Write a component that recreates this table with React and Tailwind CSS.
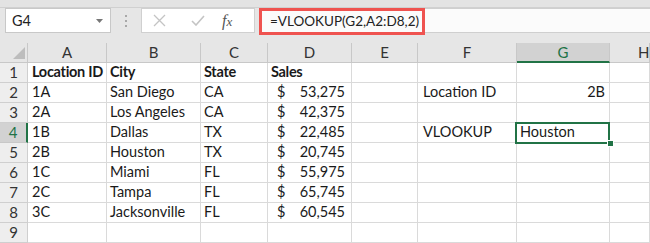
import React from "react";

const cols = ["A", "B", "C", "D", "E", "F", "G", "H"];

const rows = [
  { a: "Location ID", b: "City", c: "State", d: "Sales", bold: true },
  { a: "1A", b: "San Diego", c: "CA", d: "53,275", f: "Location ID", g: "2B" },
  { a: "2A", b: "Los Angeles", c: "CA", d: "42,375" },
  { a: "1B", b: "Dallas", c: "TX", d: "22,485", f: "VLOOKUP", g: "Houston", sel: true },
  { a: "2B", b: "Houston", c: "TX", d: "20,745" },
  { a: "1C", b: "Miami", c: "FL", d: "55,975" },
  { a: "2C", b: "Tampa", c: "FL", d: "65,745" },
  { a: "3C", b: "Jacksonville", c: "FL", d: "60,545" },
  {},
];

const cell = "h-[20px] border-r border-b border-[#dadada] flex items-center text-[14.5px] leading-none text-[#1a1a1a] whitespace-nowrap overflow-visible";

export default function App() {
  return (
    <div className="w-[650px] h-[243px] overflow-hidden bg-white font-['Lato',sans-serif] select-none">
      {/* toolbar */}
      <div className="h-[43px] bg-[#e6e6e6] flex flex-col">
        <div className="h-[8px] border-b border-[#d0d0d0] bg-[#e3e3e3]" />
        <div className="flex items-start h-[34px]">
          <div className="ml-[5px] w-[106px] h-[25px] bg-white border border-[#c8c8c8] flex items-center justify-between pl-[6px] pr-[7px]">
            <span className="text-[14.5px] text-[#222]">G4</span>
            <svg width="7" height="4" viewBox="0 0 7 4"><path d="M0 0h7L3.5 4z" fill="#777" /></svg>
          </div>
          <div className="ml-[14px] mt-[7px] flex flex-col gap-[3px]">
            <div className="w-[2px] h-[2px] bg-[#a8a8a8]" />
            <div className="w-[2px] h-[2px] bg-[#a8a8a8]" />
            <div className="w-[2px] h-[2px] bg-[#a8a8a8]" />
          </div>
          <div className="ml-[14px] w-[114px] h-[25px] bg-white border border-[#d0d0d0] flex items-center">
            <svg className="ml-[11px]" width="13" height="13" viewBox="0 0 13 13">
              <path d="M1 1L12 12M12 1L1 12" stroke="#c4c4c4" strokeWidth="1.3" />
            </svg>
            <svg className="ml-[25px]" width="14" height="11" viewBox="0 0 14 11">
              <path d="M1 6L5 10L13 1" stroke="#c4c4c4" strokeWidth="1.6" fill="none" />
            </svg>
            <span className="ml-[17px] font-['Liberation_Serif',serif] italic text-[16px] text-[#555]">
              f<span className="text-[13px]">x</span>
            </span>
          </div>
          <div className="ml-[4px] flex-1 h-[25px] bg-[#fbfbfb] border-y border-[#cfcfcf] relative">
            <div className="absolute left-0 top-[-1px] w-[166px] h-[27px] border-[3px] border-[#ef5350] flex items-center pl-[8px]">
              <span className="text-[13.5px] text-[#222] whitespace-nowrap">=VLOOKUP(G2,A2:D8,2)</span>
            </div>
          </div>
        </div>
      </div>

      {/* grid */}
      <div className="grid grid-cols-[28px_79px_94px_67px_84px_66px_99px_93px_1fr]">
        {/* header row */}
        <div className="h-[20px] bg-[#e6e6e6] border-r border-b border-[#c8c8c8] flex items-end justify-end pr-[2px] pb-[3px]">
          <svg width="12" height="12" viewBox="0 0 12 12"><path d="M12 0V12H0z" fill="#bdbdbd" /></svg>
        </div>
        {cols.map((c) =>
          c === "G" ? (
            <div key={c} className="h-[20px] bg-[#d2d2d2] border-r border-[#c8c8c8] border-b-2 border-b-[#217346] flex items-center justify-center text-[15px] text-[#217346] pt-[1px]">
              {c}
            </div>
          ) : (
            <div key={c} className={`h-[20px] bg-[#e6e6e6] border-r border-b border-[#c8c8c8] flex items-center ${c === "H" ? "justify-start pl-[28px]" : "justify-center"} text-[15px] text-[#333]`}>
              {c}
            </div>
          )
        )}
        {rows.map((r, i) => {
          const n = i + 1;
          const b = r.bold ? " font-bold tracking-[-0.3px]" : "";
          return (
            <React.Fragment key={n}>
              {r.sel ? (
                <div className="h-[20px] bg-[#d2d2d2] border-b border-[#c8c8c8] border-r-2 border-r-[#217346] flex items-center justify-center text-[15px] text-[#217346]">
                  {n}
                </div>
              ) : (
                <div className="h-[20px] bg-[#eeeeee] border-r border-b border-[#cfcfcf] flex items-center justify-center text-[15px] text-[#333]">
                  {n}
                </div>
              )}
              <div className={cell + " pl-[4px]" + b}>{r.a}</div>
              <div className={cell + " pl-[3px]" + b}>{r.b}</div>
              <div className={cell + " pl-[3px]" + b}>{r.c}</div>
              {r.bold ? (
                <div className={cell + " pl-[3px]" + b}>{r.d}</div>
              ) : r.d ? (
                <div className={cell + " justify-between pl-[9px] pr-[6px]"}>
                  <span>$</span>
                  <span>{r.d}</span>
                </div>
              ) : (
                <div className={cell} />
              )}
              <div className={cell} />
              <div className={cell + " pl-[5px]"}>{r.f}</div>
              {r.sel ? (
                <div className={cell + " pl-[3px] relative"}>
                  {r.g}
                  <div className="absolute left-[-2px] top-[-1px] w-[95px] h-[22px] border-2 border-[#217346]" />
                  <div className="absolute left-[90px] top-[17px] w-[5px] h-[5px] bg-[#217346] border border-white box-content" />
                </div>
              ) : (
                <div className={cell + " justify-end pr-[4px]"}>{r.g}</div>
              )}
              <div className={cell} />
            </React.Fragment>
          );
        })}
      </div>
    </div>
  );
}
